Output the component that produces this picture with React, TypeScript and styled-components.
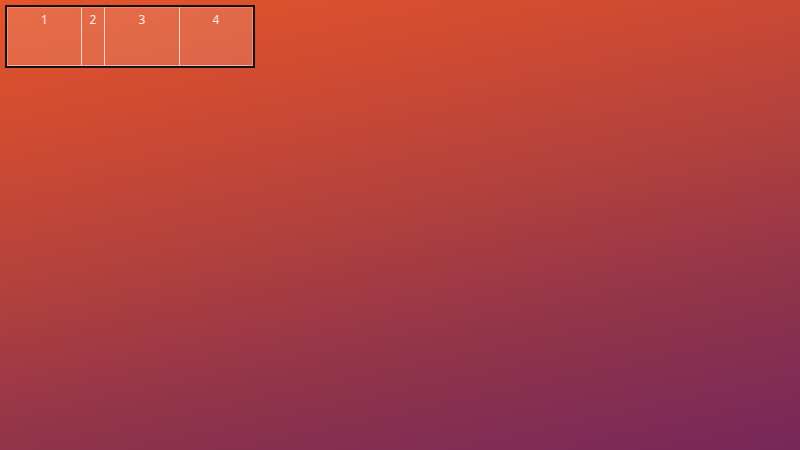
import React from "react";
import styled, { createGlobalStyle } from "styled-components";

const Global = createGlobalStyle`
  html, body { margin: 0; padding: 0; height: 100%; }
  #root { height: 100%; }
`;

const Desktop = styled.div`
  width: 100vw;
  height: 100vh;
  box-sizing: border-box;
  padding: 5px;
  background: linear-gradient(168deg, #e3552a 0%, #d24c31 20%, #b5423c 45%, #933549 70%, #76275a 100%);
  font-family: "Noto Sans", "DejaVu Sans", sans-serif;
`;

const Strip = styled.div`
  display: flex;
  width: 250px;
  height: 63px;
  box-sizing: border-box;
  border: 2px solid #161010;
`;

const Cell = styled.div<{ $w: number; $first?: boolean }>`
  width: ${(p) => p.$w}px;
  box-sizing: border-box;
  flex: none;
  background: rgba(255, 205, 180, 0.2);
  border-top: 1px solid rgba(255, 220, 200, 0.25);
  border-bottom: 1px solid rgba(255, 225, 210, 0.6);
  border-left: 1px solid ${(p) => (p.$first ? "rgba(255,220,200,0.35)" : "#f6d3bf")};
  color: #f8ede6;
  font-size: 12px;
  line-height: 14px;
  text-align: center;
  padding-top: 5px;
`;

const LastCell = styled(Cell)`
  border-right: 1px solid rgba(255, 220, 200, 0.35);
`;

export default function App() {
  return (
    <>
      <Global />
      <Desktop>
        <Strip>
          <Cell $w={74} $first>1</Cell>
          <Cell $w={23}>2</Cell>
          <Cell $w={75}>3</Cell>
          <LastCell $w={74}>4</LastCell>
        </Strip>
      </Desktop>
    </>
  );
}
